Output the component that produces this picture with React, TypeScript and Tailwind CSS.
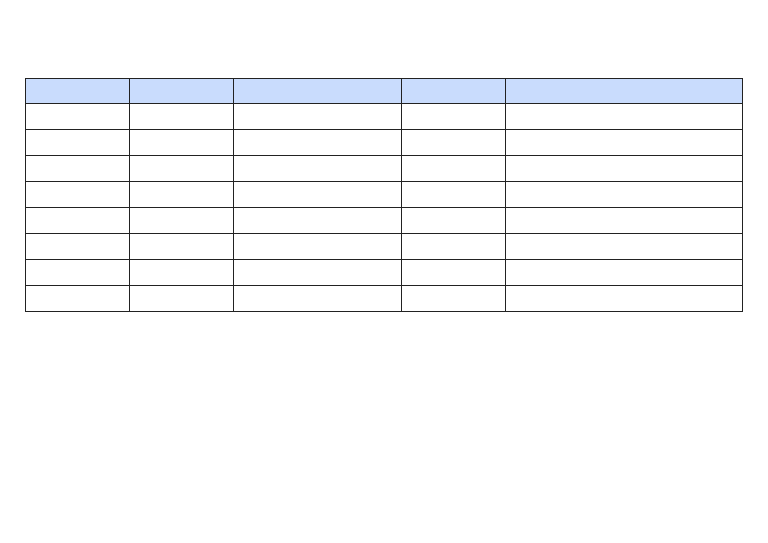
import React from "react";

const widths = [104, 104, 168, 104, 237];
const bodyRows = 8;

export default function App() {
  return (
    <div className="min-h-screen bg-white pt-[78px] pl-[25px] font-['Liberation_Sans',sans-serif]">
      <table className="table-fixed border-collapse w-[718px]">
        <colgroup>
          {widths.map((w, i) => (
            <col key={i} style={{ width: w }} />
          ))}
        </colgroup>
        <thead>
          <tr className="h-[25px] bg-[#c9dcfd]">
            {widths.map((_, i) => (
              <th key={i} className="border border-[#222222] p-0" />
            ))}
          </tr>
        </thead>
        <tbody>
          {Array.from({ length: bodyRows }).map((_, r) => (
            <tr key={r} className="h-[26px]">
              {widths.map((_, i) => (
                <td key={i} className="border border-[#222222] p-0" />
              ))}
            </tr>
          ))}
        </tbody>
      </table>
    </div>
  );
}
